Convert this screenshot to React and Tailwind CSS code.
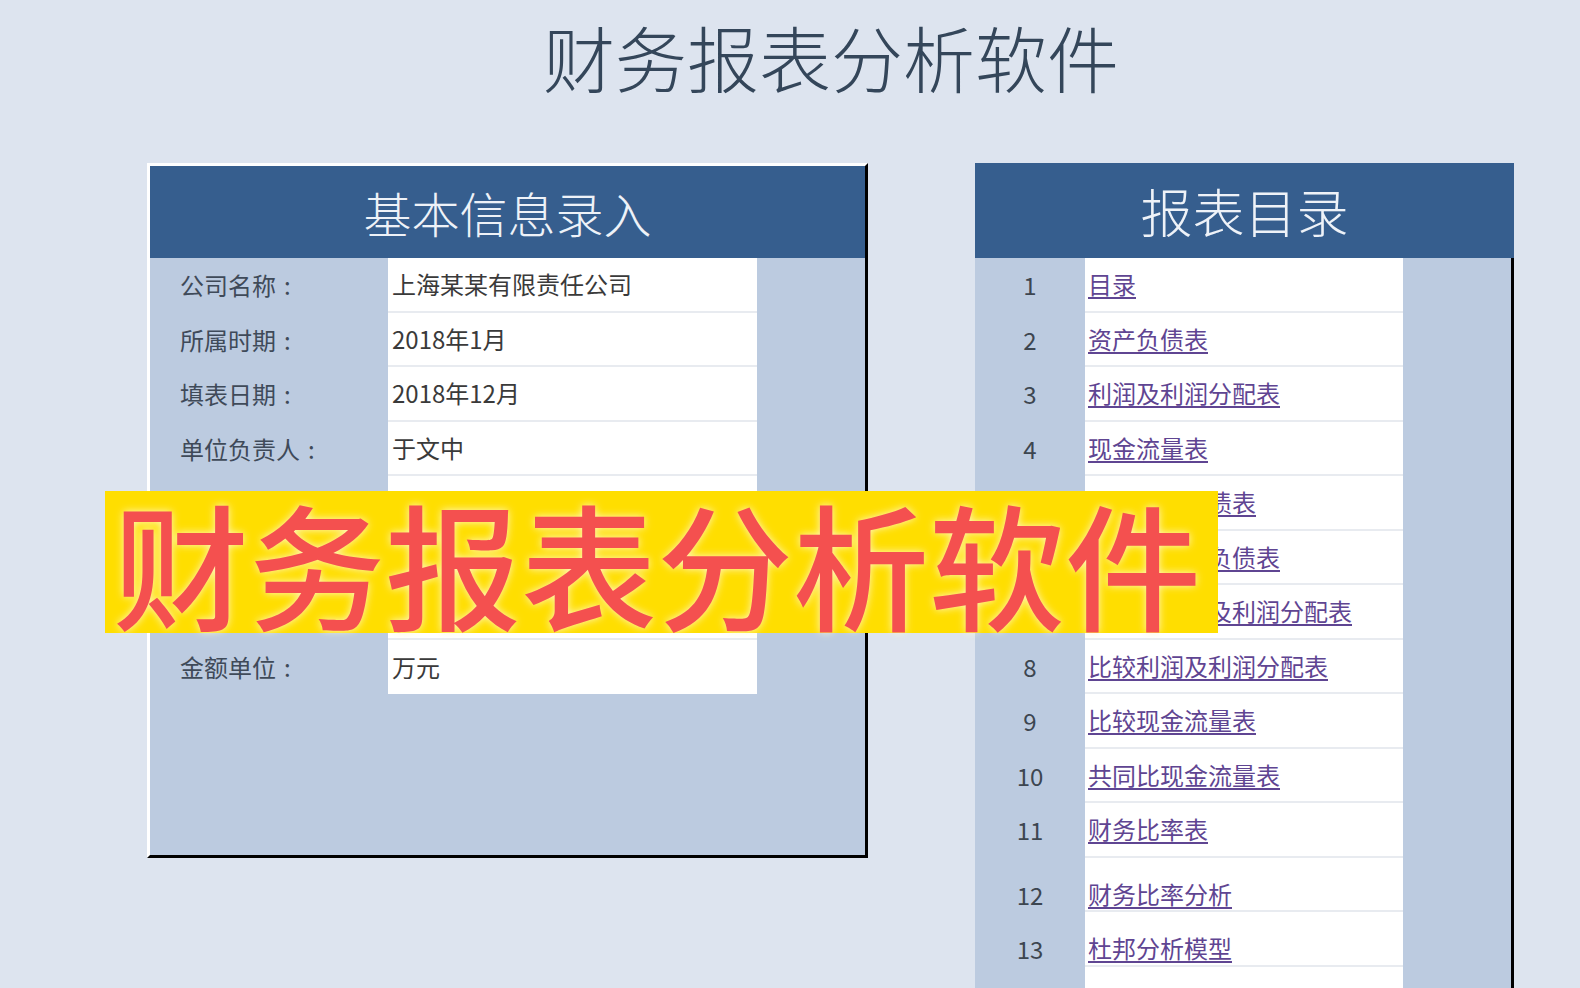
import React from 'react';

// rows 5-7 are hidden under the caption banner in the picture, so they stay empty
const infoRows = [
    ['公司名称', '上海某某有限责任公司'],
    ['所属时期', '2018年1月'],
    ['填表日期', '2018年12月'],
    ['单位负责人', '于文中'],
    ['', ''],
    ['', ''],
    ['', ''],
    ['金额单位', '万元'],
];

const reports = [
    '目录',
    '资产负债表',
    '利润及利润分配表',
    '现金流量表',
    '比较资产负债表',
    '共同比资产负债表',
    '共同比利润及利润分配表',
    '比较利润及利润分配表',
    '比较现金流量表',
    '共同比现金流量表',
    '财务比率表',
    '财务比率分析',
    '杜邦分析模型',
];

const font = "font-['Noto_Sans_CJK_SC','Noto_Sans',sans-serif]";

export default function App() {
    return (
        <div className={`relative h-[988px] w-full overflow-hidden bg-[#dde4ef] ${font}`}>
            {/* page title */}
            <div className="flex justify-center pl-[82px] pt-[20px]">
                <h1 className="text-[72px] leading-[72px] font-light text-[#34465a]">财务报表分析软件</h1>
            </div>

            <div className="mt-[71px] flex items-start">
                {/* basic info panel */}
                <div className="ml-[147px] w-[721px] border-l-[3px] border-t-[3px] border-r-[3px] border-b-[3px] border-l-white border-t-white border-r-black border-b-black bg-[#bccbe0]">
                    <div className="flex h-[92px] items-center justify-center bg-[#365e8e]">
                        <span className="text-[48px] leading-none font-light text-[#eef2f8]">基本信息录入</span>
                    </div>
                    {infoRows.map(([label, value], i) => (
                        <div key={i} className="flex h-[54.5px]">
                            <div className="flex w-[238px] items-center pl-[30px] text-[24px] text-[#3f4a59]">
                                {label}
                                {label && <span className="ml-[8px]">:</span>}
                            </div>
                            <div
                                className={`flex w-[369px] items-center bg-white pl-[4px] text-[24px] text-[#3a3a3a] ${i < infoRows.length - 1 ? 'border-b-2 border-[#e8ebf0]' : ''}`}
                            >
                                {value}
                            </div>
                        </div>
                    ))}
                    <div className="h-[161px]" />
                </div>

                {/* report index panel */}
                <div className="ml-[107px] w-[539px]">
                    <div className="flex h-[95px] items-center justify-center bg-[#365e8e]">
                        <span className="text-[52px] leading-none font-light text-[#eef2f8]">报表目录</span>
                    </div>
                    <div className="border-r-[3px] border-black bg-[#bccbe0]">
                        {reports.map((name, i) => (
                            <div key={i} className="flex h-[54.5px]">
                                <div className={`flex w-[110px] items-center justify-center text-[24px] text-[#3d4650] ${i >= 11 ? 'pt-5' : ''}`}>
                                    {i + 1}
                                </div>
                                <div className={`flex w-[318px] items-center border-b-2 border-[#e8ebf0] bg-white pl-[3px] ${i >= 11 ? 'pt-5' : ''}`}>
                                    <a href="#" className="text-[24px] text-[#5f4592] underline decoration-2 underline-offset-[3px]">{name}</a>
                                </div>
                            </div>
                        ))}
                        <div className="flex h-[54.5px]">
                            <div className="w-[110px]" />
                            <div className="w-[318px] bg-white" />
                        </div>
                    </div>
                </div>
            </div>

            {/* yellow caption banner over the page */}
            <div className="absolute left-[105px] top-[491px] flex h-[142px] w-[1113px] items-center bg-[#ffde00] pl-[8px]">
                <span className="text-[136px] leading-none font-medium text-[#f4504f] [text-shadow:0_0_8px_rgba(255,250,210,0.95)]">
                    财务报表分析软件
                </span>
            </div>
        </div>
    );
}
